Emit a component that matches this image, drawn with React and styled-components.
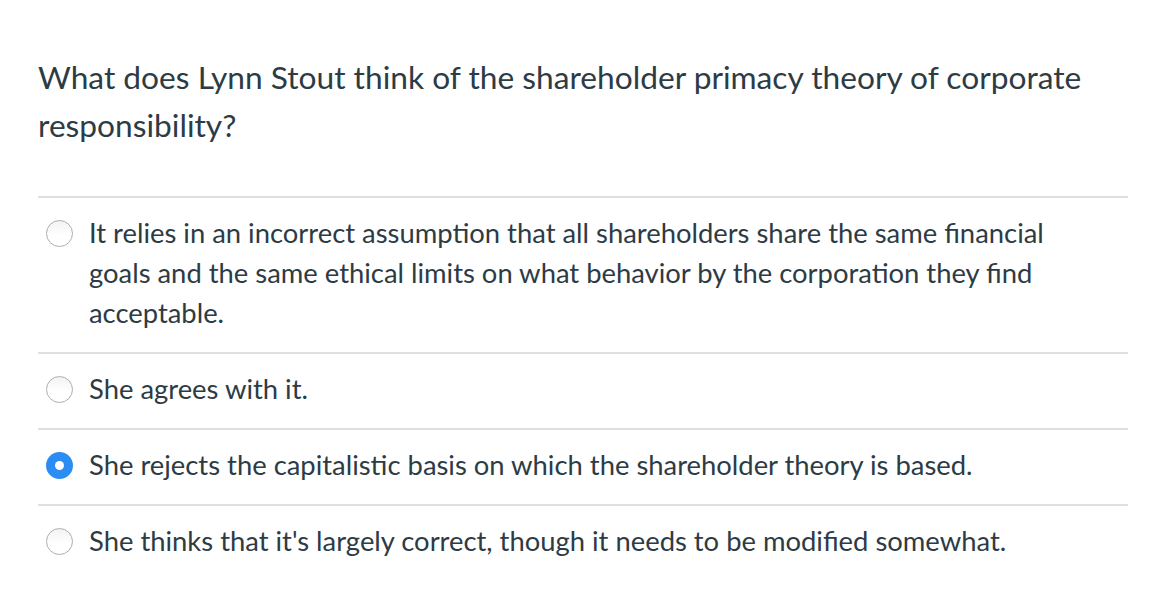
import React, { useState } from "react";
import styled, { createGlobalStyle } from "styled-components";

const GlobalStyle = createGlobalStyle`
  body {
    margin: 0;
    background: #ffffff;
    font-family: Lato, "Open Sans", sans-serif;
    color: #2d3b45;
  }
`;

const QuizContainer = styled.div`
  width: 1090px;
  padding: 53px 0 0 38px;
`;

const Question = styled.h2`
  margin: 0 0 47px 0;
  font-size: 31.7px;
  line-height: 48px;
  font-weight: 400;
`;

const AnswerList = styled.div`
  border-top: 2px solid #dfdfdf;
`;

const AnswerRow = styled.label`
  display: flex;
  align-items: flex-start;
  gap: 16px;
  padding: 15px 0 19px 8px;
  border-bottom: 2px solid #dfdfdf;
  font-size: 27.4px;
  line-height: 40px;
  cursor: pointer;

  &:last-child {
    border-bottom: none;
  }
`;

const Radio = styled.span`
  flex: none;
  box-sizing: border-box;
  width: 27px;
  height: 27px;
  margin-top: 7px;
  border-radius: 50%;
  display: flex;
  align-items: center;
  justify-content: center;
  border: ${(props) => (props.checked ? "none" : "1.5px solid #adadad")};
  background: ${(props) =>
    props.checked
      ? "#2b8cf4"
      : "linear-gradient(to bottom, #f3f3f3 0%, #ffffff 60%)"};

  &::after {
    content: "";
    display: ${(props) => (props.checked ? "block" : "none")};
    width: 9px;
    height: 9px;
    border-radius: 50%;
    background: #ffffff;
  }
`;

const AnswerText = styled.span`
  flex: 1;
  padding-right: 20px;
`;

const answers = [
  "It relies in an incorrect assumption that all shareholders share the same financial goals and the same ethical limits on what behavior by the corporation they find acceptable.",
  "She agrees with it.",
  "She rejects the capitalistic basis on which the shareholder theory is based.",
  "She thinks that it's largely correct, though it needs to be modified somewhat.",
];

const App = () => {
  const [selected, setSelected] = useState(2);

  return (
    <QuizContainer>
      <GlobalStyle />
      <Question>
        What does Lynn Stout think of the shareholder primacy theory of
        corporate responsibility?
      </Question>
      <AnswerList>
        {answers.map((answer, i) => (
          <AnswerRow key={i} onClick={() => setSelected(i)}>
            <Radio checked={selected === i} />
            <AnswerText>{answer}</AnswerText>
          </AnswerRow>
        ))}
      </AnswerList>
    </QuizContainer>
  );
};

export default App;
